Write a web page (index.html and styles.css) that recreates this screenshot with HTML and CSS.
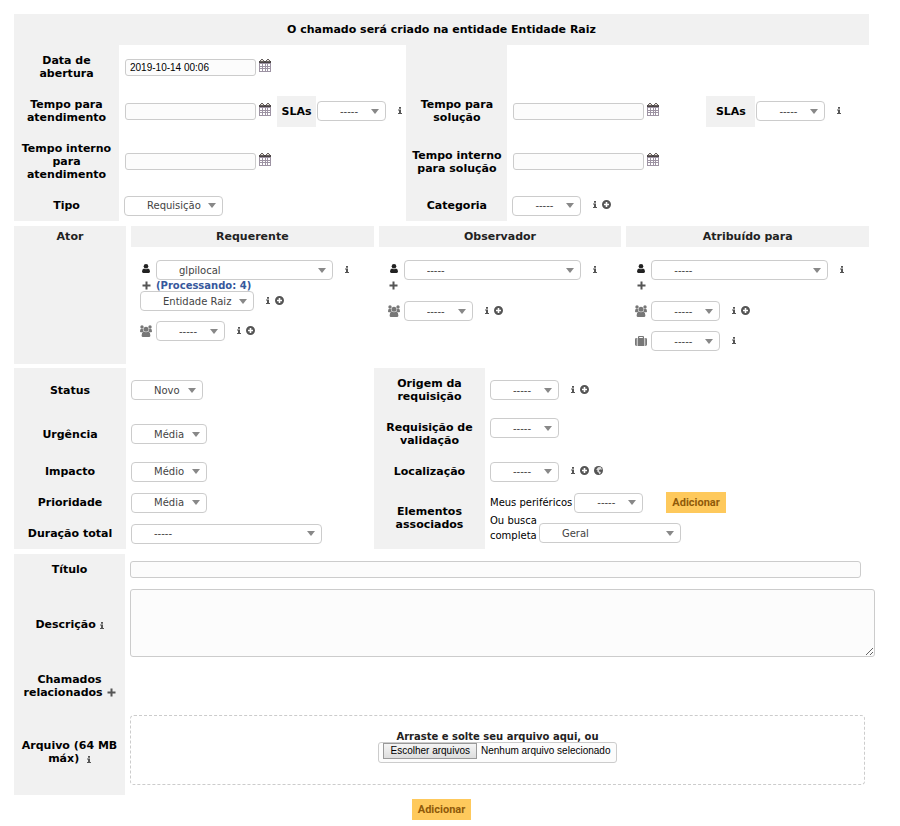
FILE: index.html
```html
<!DOCTYPE html>
<html lang="pt-BR">
<head>
    <meta charset="UTF-8">
    <meta name="viewport" content="width=device-width, initial-scale=1.0">
    <title>Novo chamado</title>
    <link rel="stylesheet" href="styles.css">
</head>
<body>
<svg class="sprite" aria-hidden="true">
    <symbol id="calendar" viewBox="0 0 12 13">
        <path d="M0 2h12v11H0z" fill="#9d93a3"/>
        <path d="M0 2h12v2H0z" fill="#4a4444"/>
        <path d="M1 5h2v2H1zM4 5h2v2H4zM7 5h1v2H7zM9 5h2v2H9zM1 8h2v1H1zM4 8h2v1H4zM7 8h1v1H7zM9 8h2v1H9zM1 10h2v2H1zM4 10h2v2H4zM7 10h1v2H7zM9 10h2v2H9z" fill="#fff"/>
        <path d="M1 1h1v-1h2v1h1v2H1zM7 1h1v-1h2v1h1v2H7z" fill="#66605f"/>
        <path d="M2 1h2v1H2zM8 1h2v1H8z" fill="#e8e0d8"/>
    </symbol>
    <symbol id="info" viewBox="0 0 4 7">
        <path d="M1 0h2v1.7H1zM0 2.6h3V6h1v1H0V6h1V3.6H0z"/>
    </symbol>
    <symbol id="plus" viewBox="0 0 9 9">
        <path d="M3.5 0.5h2v3h3v2h-3v3h-2v-3h-3v-2h3z"/>
    </symbol>
    <symbol id="plus-circle" viewBox="0 0 9 9">
        <path fill-rule="evenodd" d="M4.5 0a4.5 4.5 0 1 0 0 9a4.5 4.5 0 0 0 0-9zM3.7 2h1.6v1.7H7v1.6H5.3V7H3.7V5.3H2V3.7h1.7z"/>
    </symbol>
    <symbol id="globe" viewBox="0 0 9 9">
        <circle cx="4.5" cy="4.5" r="4.5"/>
        <path d="M4 1.2l2.6-.2 1.4 2.2-.8.5-1-.4-1.2 1 .2 1.2 1.6.4-.2 1.4-1.4 1-.4-1.6-1.6-1.2.3-1.2-1.3-.6z" fill="#ddd"/>
    </symbol>
    <symbol id="user" viewBox="0 0 8 9">
        <circle cx="4" cy="2.3" r="2.3"/>
        <path d="M2 4.4Q4 6 6 4.4Q8 4.8 8 7.6Q8 9 6.7 9H1.3Q0 9 0 7.6Q0 4.8 2 4.4z"/>
    </symbol>
    <symbol id="users" viewBox="0 0 12 12">
        <circle cx="2" cy="2" r="1.7"/>
        <circle cx="10" cy="2" r="1.7"/>
        <path d="M0 6.4Q0 3.8 1.2 3.8L3.2 4.2Q3 5.6 3.8 6.6L2 7.2H.8Q0 7.2 0 6.4zM12 6.4Q12 3.8 10.8 3.8L8.8 4.2Q9 5.6 8.2 6.6L10 7.2h1.2Q12 7.2 12 6.4z"/>
        <circle cx="6" cy="4.2" r="2.5"/>
        <path d="M3.8 6.6Q6 8 8.2 6.6Q10.4 7.4 10.4 10.4Q10.4 12 9 12H3Q1.6 12 1.6 10.4Q1.6 7.4 3.8 6.6z"/>
    </symbol>
    <symbol id="suitcase" viewBox="0 0 12 10">
        <path fill-rule="evenodd" d="M3 2V1q0-1 1-1h4q1 0 1 1v1h.4v8H2.6V2zM4.2 2h3.6V1H4.2zM1.8 2v8H1.4Q0 10 0 8.6V3.4Q0 2 1.4 2zM10.2 2v8h.4Q12 10 12 8.6V3.4Q12 2 10.6 2z"/>
    </symbol>
</svg>

<form class="ticket">
    <h1 class="title">O chamado será criado na entidade Entidade Raiz</h1>

    <div class="times">
        <label class="label" for="openDate">Data de abertura</label>
        <div class="field">
            <div class="date-field">
                <input id="openDate" class="input date" type="text" value="2019-10-14 00:06">
                <svg class="calendar"><use href="#calendar"/></svg>
            </div>
        </div>
        <div class="label"></div>
        <div class="field"></div>

        <label class="label" for="ownDate">Tempo para atendimento</label>
        <div class="field">
            <div class="date-field">
                <input id="ownDate" class="input date" type="text">
                <svg class="calendar"><use href="#calendar"/></svg>
            </div>
            <label class="sla" for="slaOwn">SLAs</label>
            <select id="slaOwn" class="select short"><option>-----</option></select>
            <svg class="icon info"><use href="#info"/></svg>
        </div>
        <label class="label" for="solveDate">Tempo para solução</label>
        <div class="field">
            <div class="date-field wide">
                <input id="solveDate" class="input date" type="text">
                <svg class="calendar"><use href="#calendar"/></svg>
            </div>
            <label class="sla wide" for="slaSolve">SLAs</label>
            <select id="slaSolve" class="select short"><option>-----</option></select>
            <svg class="icon info"><use href="#info"/></svg>
        </div>

        <label class="label" for="intOwnDate">Tempo interno para atendimento</label>
        <div class="field">
            <div class="date-field">
                <input id="intOwnDate" class="input date" type="text">
                <svg class="calendar"><use href="#calendar"/></svg>
            </div>
        </div>
        <label class="label" for="intSolveDate">Tempo interno para solução</label>
        <div class="field">
            <div class="date-field">
                <input id="intSolveDate" class="input date" type="text">
                <svg class="calendar"><use href="#calendar"/></svg>
            </div>
        </div>

        <label class="label" for="type">Tipo</label>
        <div class="field">
            <select id="type" class="select type"><option>Requisição</option></select>
        </div>
        <label class="label" for="category">Categoria</label>
        <div class="field">
            <select id="category" class="select short"><option>-----</option></select>
            <svg class="icon info"><use href="#info"/></svg>
            <svg class="icon"><use href="#plus-circle"/></svg>
        </div>
    </div>

    <div class="actors">
        <div class="actor-label">Ator</div>
        <section class="actor">
            <h2 class="actor-title">Requerente</h2>
            <div class="actor-body">
                <div class="actor-row">
                    <span class="slot"><svg class="user"><use href="#user"/></svg></span>
                    <select class="select person" aria-label="Requerente"><option>glpilocal</option></select>
                    <svg class="icon info"><use href="#info"/></svg>
                </div>
                <div class="actor-more">
                    <span class="slot"><svg class="icon"><use href="#plus"/></svg></span>
                    <a href="#" class="processing">(Processando: 4)</a>
                </div>
                <div class="actor-row">
                    <select class="select entity" aria-label="Entidade"><option>Entidade Raiz</option></select>
                    <svg class="icon info"><use href="#info"/></svg>
                    <svg class="icon"><use href="#plus-circle"/></svg>
                </div>
                <div class="actor-row group">
                    <span class="slot"><svg class="users"><use href="#users"/></svg></span>
                    <select class="select short" aria-label="Grupo requerente"><option>-----</option></select>
                    <svg class="icon info"><use href="#info"/></svg>
                    <svg class="icon"><use href="#plus-circle"/></svg>
                </div>
            </div>
        </section>
        <section class="actor">
            <h2 class="actor-title">Observador</h2>
            <div class="actor-body">
                <div class="actor-row">
                    <span class="slot"><svg class="user"><use href="#user"/></svg></span>
                    <select class="select person" aria-label="Observador"><option>-----</option></select>
                    <svg class="icon info"><use href="#info"/></svg>
                </div>
                <div class="actor-more">
                    <span class="slot"><svg class="icon"><use href="#plus"/></svg></span>
                </div>
                <div class="actor-row group">
                    <span class="slot"><svg class="users"><use href="#users"/></svg></span>
                    <select class="select short" aria-label="Grupo observador"><option>-----</option></select>
                    <svg class="icon info"><use href="#info"/></svg>
                    <svg class="icon"><use href="#plus-circle"/></svg>
                </div>
            </div>
        </section>
        <section class="actor">
            <h2 class="actor-title">Atribuído para</h2>
            <div class="actor-body">
                <div class="actor-row">
                    <span class="slot"><svg class="user"><use href="#user"/></svg></span>
                    <select class="select person" aria-label="Atribuído para"><option>-----</option></select>
                    <svg class="icon info"><use href="#info"/></svg>
                </div>
                <div class="actor-more">
                    <span class="slot"><svg class="icon"><use href="#plus"/></svg></span>
                </div>
                <div class="actor-row group">
                    <span class="slot"><svg class="users"><use href="#users"/></svg></span>
                    <select class="select short" aria-label="Grupo atribuído"><option>-----</option></select>
                    <svg class="icon info"><use href="#info"/></svg>
                    <svg class="icon"><use href="#plus-circle"/></svg>
                </div>
                <div class="actor-row group">
                    <span class="slot"><svg class="suitcase"><use href="#suitcase"/></svg></span>
                    <select class="select short" aria-label="Fornecedor"><option>-----</option></select>
                    <svg class="icon info"><use href="#info"/></svg>
                </div>
            </div>
        </section>
    </div>

    <div class="details">
        <div class="details-left">
            <label class="label" for="status">Status</label>
            <div class="field"><select id="status" class="select status"><option>Novo</option></select></div>
            <label class="label" for="urgency">Urgência</label>
            <div class="field"><select id="urgency" class="select level"><option>Média</option></select></div>
            <label class="label" for="impact">Impacto</label>
            <div class="field"><select id="impact" class="select level"><option>Médio</option></select></div>
            <label class="label" for="priority">Prioridade</label>
            <div class="field"><select id="priority" class="select level"><option>Média</option></select></div>
            <label class="label" for="duration">Duração total</label>
            <div class="field"><select id="duration" class="select duration"><option>-----</option></select></div>
        </div>
        <div class="details-right">
            <label class="label" for="source">Origem da requisição</label>
            <div class="field">
                <select id="source" class="select short"><option>-----</option></select>
                <svg class="icon info"><use href="#info"/></svg>
                <svg class="icon"><use href="#plus-circle"/></svg>
            </div>
            <label class="label" for="validation">Requisição de validação</label>
            <div class="field top">
                <select id="validation" class="select short"><option>-----</option></select>
            </div>
            <label class="label" for="location">Localização</label>
            <div class="field">
                <select id="location" class="select short"><option>-----</option></select>
                <svg class="icon info"><use href="#info"/></svg>
                <svg class="icon"><use href="#plus-circle"/></svg>
                <svg class="icon"><use href="#globe"/></svg>
            </div>
            <div class="label">Elementos associados</div>
            <div class="items">
                <div class="items-row">
                    <label for="devices">Meus periféricos</label>
                    <select id="devices" class="select short"><option>-----</option></select>
                    <button type="button" class="btn items-btn">Adicionar</button>
                </div>
                <div class="items-row search">
                    <label for="search">Ou busca<br>completa</label>
                    <select id="search" class="select general"><option>Geral</option></select>
                </div>
            </div>
        </div>
    </div>

    <div class="content">
        <label class="label" for="name">Título</label>
        <div class="field"><input id="name" class="input name" type="text"></div>
        <label class="label" for="description"><span>Descrição <svg class="icon inline info"><use href="#info"/></svg></span></label>
        <div class="field"><textarea id="description" class="input description"></textarea></div>
        <div class="label"><span>Chamados relacionados <svg class="icon inline"><use href="#plus"/></svg></span></div>
        <div class="field"></div>
        <div class="label"><span>Arquivo (64 MB máx) &nbsp;<svg class="icon inline info"><use href="#info"/></svg></span></div>
        <div class="field">
            <div class="dropzone">
                <strong class="drop-text">Arraste e solte seu arquivo aqui, ou</strong>
                <div class="file-box">
                    <input id="files" class="file-input" type="file" multiple>
                    <label class="file-btn" for="files">Escolher arquivos</label>
                    <span>Nenhum arquivo selecionado</span>
                </div>
            </div>
        </div>
    </div>

    <div class="submit">
        <button type="submit" class="btn">Adicionar</button>
    </div>
</form>
</body>
</html>
```

FILE: styles.css
```css
* {
    box-sizing: border-box;
}

body {
    margin: 0;
    padding: 14px 31px 6px 14px;
    background: #fff;
    color: #000;
    font-family: "DejaVu Sans", Verdana, sans-serif;
    font-size: 10px;
}

.sprite {
    display: none;
}

.title {
    margin: 0;
    background: #f1f1f1;
    font-size: 11px;
    line-height: 31px;
    text-align: center;
}

.label {
    display: flex;
    align-items: center;
    justify-content: center;
    padding: 0 5px;
    background: #f1f1f1;
    font-size: 11px;
    font-weight: bold;
    line-height: 13px;
    text-align: center;
}

.field {
    display: flex;
    align-items: center;
    min-width: 0;
    padding-left: 5px;
}

/* form controls */
.input {
    border: 1px solid #ccc;
    border-radius: 3px;
    background: #fcfcfc;
    color: #000;
    font-family: "Liberation Sans", Arial, sans-serif;
    font-size: 10px;
    height: 17px;
    padding: 0 4px;
}

.date {
    width: 131px;
}

.select {
    appearance: none;
    flex: none;
    height: 20px;
    margin: 0;
    padding: 0 0 0 22px;
    border: 1px solid #ccc;
    border-radius: 4px;
    background: #fff url("data:image/svg+xml,%3Csvg xmlns='http://www.w3.org/2000/svg' width='8' height='5'%3E%3Cpath d='M0 0h8L4 5z' fill='%23888'/%3E%3C/svg%3E") no-repeat right 6px center;
    color: #444;
    font-family: inherit;
    font-size: 10px;
}

.short {
    width: 69px;
}

.type {
    width: 99px;
}

.status {
    width: 72px;
}

.level {
    width: 76px;
}

.duration {
    width: 191px;
}

.general {
    width: 142px;
}

.person {
    width: 177px;
}

.entity {
    width: 114px;
}

.btn {
    height: 21px;
    padding: 0 6px;
    border: none;
    background: #fec95c;
    color: #8f5a0a;
    font-family: Roboto, sans-serif;
    font-size: 11px;
    font-weight: bold;
    cursor: pointer;
}

/* icons */
.icon {
    flex: none;
    width: 9px;
    height: 9px;
    margin-bottom: 2px;
    margin-left: 5px;
    fill: #555;
}

.info {
    width: 4px;
    height: 7px;
    margin-left: 12px;
}

.inline {
    margin: 0;
    vertical-align: -1px;
}

.calendar {
    flex: none;
    width: 12px;
    height: 13px;
    margin-left: 3px;
}

.user {
    width: 8px;
    height: 9px;
    margin-bottom: 3px;
    fill: #222;
}

.users {
    width: 12px;
    height: 12px;
    fill: #777;
}

.suitcase {
    width: 12px;
    height: 10px;
    fill: #777;
}

/* dates */
.times {
    display: grid;
    grid-template-columns: 105px 31fr 101px 39fr;
    grid-template-rows: 44px 44px 57px 31px;
}

.date-field {
    display: flex;
    align-items: flex-start;
    flex: none;
    width: 153px;
    padding-left: 1px;
}

.date-field.wide {
    width: 194px;
}

.sla {
    flex: none;
    width: 39px;
    margin-right: 1px;
    background: #f1f1f1;
    font-size: 11px;
    font-weight: bold;
    line-height: 31px;
    text-align: center;
}

.sla.wide {
    width: 49px;
}

/* actors */
.actors {
    display: grid;
    grid-template-columns: 112px 1fr 1fr 1fr;
    column-gap: 5px;
    min-height: 138px;
    margin-top: 5px;
}

.actor-label,
.actor-title {
    margin: 0;
    background: #f1f1f1;
    color: #222;
    font-size: 11px;
    font-weight: bold;
    line-height: 21px;
    text-align: center;
}

.actor-body {
    padding: 13px 0 0 9px;
}

.actor-row {
    display: flex;
    align-items: center;
}

.actor-row.group {
    margin-top: 10px;
}

.actor-more {
    display: flex;
    align-items: center;
    height: 11px;
}

.slot {
    display: flex;
    flex: none;
    justify-content: center;
    width: 12px;
    margin-right: 4px;
}

.slot .icon {
    margin: 0;
}

.processing {
    color: #36589c;
    font-weight: bold;
    text-decoration: none;
}

/* status, source, items */
.details {
    display: grid;
    grid-template-columns: 360fr 495fr;
    margin-top: 4px;
}

.details-left,
.details-right {
    display: grid;
    grid-template-rows: 44px 44px 31px 31px 31px;
}

.details-left {
    grid-template-columns: 112px 1fr;
}

.details-right {
    grid-template-columns: 111px 1fr;
    grid-template-rows: 44px 44px 31px 62px;
}

.field.top {
    align-items: flex-start;
    padding-top: 6px;
}

.items {
    padding: 5px 0 0 5px;
}

.items-row {
    display: flex;
    align-items: center;
    gap: 2px;
}

.items-row.search {
    align-items: flex-end;
    line-height: 15px;
}

.items-btn {
    margin-left: 21px;
}

/* title, description, files */
.content {
    display: grid;
    grid-template-columns: 111px 1fr;
    grid-template-rows: 31px 78px 45px 87px;
    margin-top: 5px;
}

.name {
    width: calc(100% - 8px);
}

.description {
    flex: none;
    width: calc(100% + 6px);
    height: 68px;
    margin-bottom: 2px;
}

.dropzone {
    display: flex;
    flex-direction: column;
    align-items: center;
    width: calc(100% - 4px);
    height: 70px;
    margin-bottom: 3px;
    padding-top: 15px;
    border: 1px dashed #ccc;
    border-radius: 4px;
}

.drop-text {
    color: #222;
    line-height: 11px;
}

.file-box {
    display: flex;
    align-items: flex-start;
    gap: 4px;
    height: 21px;
    padding: 0 5px 0 4px;
    border: 1px solid #ccc;
    border-radius: 3px;
    background: #fcfcfc;
    font-family: "Liberation Sans", Arial, sans-serif;
    line-height: 16px;
}

.file-input {
    position: absolute;
    width: 1px;
    height: 1px;
    opacity: 0;
}

.file-btn {
    height: 16px;
    padding: 0 6px;
    border: 1px solid #999;
    background: linear-gradient(#f4f4f4, #ddd);
    line-height: 14px;
}

.submit {
    display: flex;
    justify-content: center;
    margin-top: 4px;
}
```
